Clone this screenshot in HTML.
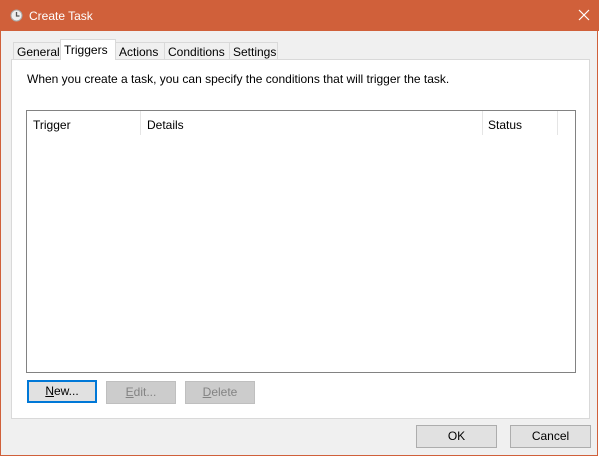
<!DOCTYPE html>
<html><head><style>
*{margin:0;padding:0;box-sizing:border-box}
body{width:600px;height:456px;background:#fff;font-family:"Liberation Sans",sans-serif;font-size:12px;color:#000;position:relative;overflow:hidden}
.win{position:absolute;left:0;top:0;width:598px;height:456px;background:#f0f0f0;border:1px solid #d0603a;border-top:none}
.title{position:absolute;left:0;top:0;width:598px;height:31px;background:#d0603a;color:#fff;font-size:12px}
.title span{position:absolute;left:28px;top:9px}
.abs{position:absolute}
.tab{position:absolute;top:42px;height:18px;border:1px solid #d9d9d9;border-bottom:none;background:#f0f0f0;padding:2px 0 0 3px}
.panel{position:absolute;left:10px;top:59px;width:579px;height:360px;background:#fff;border:1px solid #d9d9d9}
.table{position:absolute;left:25px;top:110px;width:550px;height:263px;border:1px solid #828282;background:#fff}
.sep{position:absolute;top:0;width:1px;height:24px;background:#e5e5e5}
.btn{position:absolute;height:23px;border:1px solid #adadad;background:#e1e1e1;text-align:center;line-height:21px}
.dis{background:#cccccc;border-color:#bfbfbf;color:#838383}
</style></head><body>
<div class="win">
<div class="title">
<svg class="abs" style="left:9px;top:9px" width="13" height="13" viewBox="0 0 13 13"><circle cx="6.5" cy="6.5" r="5.5" fill="#eee" stroke="#aaa"/><path d="M6.5 3v4h3" stroke="#555" stroke-width="1.3" fill="none"/></svg>
<span>Create Task</span>
<svg class="abs" style="left:577px;top:9px" width="12" height="12" viewBox="0 0 12 12"><path d="M1 1L11 11M11 1L1 11" stroke="#fff" stroke-width="1.2"/></svg>
</div>
<div class="tab" style="left:12px;width:48px">General</div>
<div class="tab" style="left:114px;width:50px">Actions</div>
<div class="tab" style="left:163px;width:66px">Conditions</div>
<div class="tab" style="left:228px;width:49px">Settings</div>
<div class="panel"></div>
<div class="tab" style="left:59px;top:39px;width:56px;height:21px;background:#fff;z-index:2;padding-top:3px">Triggers</div>
<div class="abs" style="left:26px;top:72px">When you create a task, you can specify the conditions that will trigger the task.</div>
<div class="table">
<div class="abs" style="left:6px;top:7px">Trigger</div>
<div class="sep" style="left:113px"></div>
<div class="abs" style="left:120px;top:7px">Details</div>
<div class="sep" style="left:455px"></div>
<div class="abs" style="left:461px;top:7px">Status</div>
<div class="sep" style="left:530px"></div>
</div>
<div class="btn" style="left:26px;top:380px;width:70px;border:1px solid #0078d7;box-shadow:inset 0 0 0 1px #0078d7"><u>N</u>ew...</div>
<div class="btn dis" style="left:105px;top:381px;width:70px"><u>E</u>dit...</div>
<div class="btn dis" style="left:184px;top:381px;width:70px"><u>D</u>elete</div>
<div class="btn" style="left:415px;top:425px;width:81px">OK</div>
<div class="btn" style="left:509px;top:425px;width:81px">Cancel</div>
</div>
</body></html>
